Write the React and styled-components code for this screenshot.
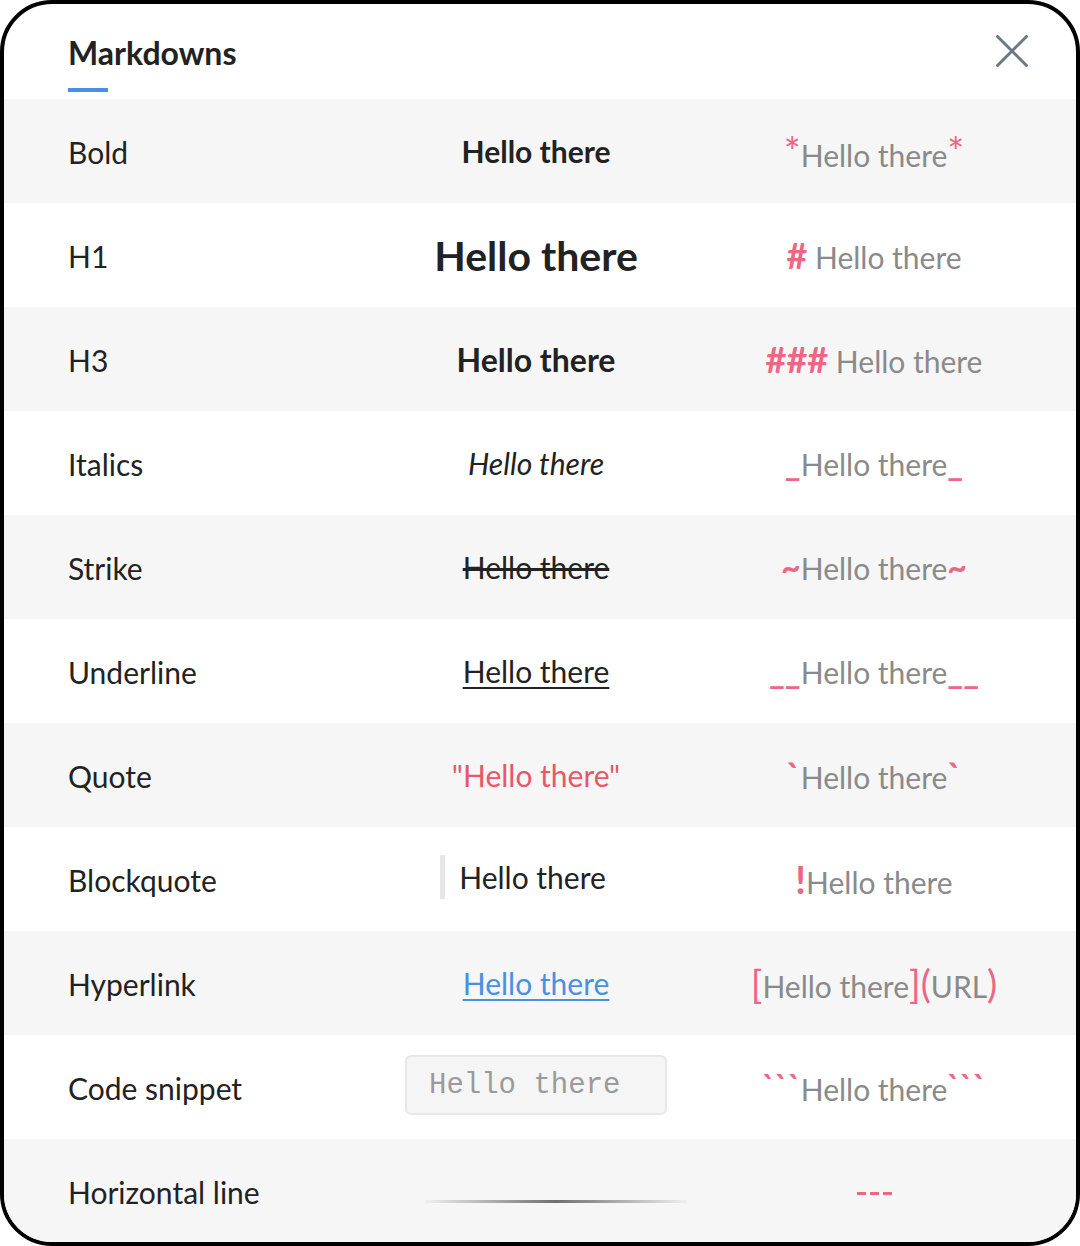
import React from 'react'
import styled, {createGlobalStyle} from 'styled-components';

const pink = '#ec6685';
const grey = '#8a8a8a';

const GlobalStyle = createGlobalStyle`
    html, body {
        margin: 0;
        padding: 0;
        background: #ffffff;
        font-family: Lato, "Open Sans", sans-serif;
    }
`;

const Card = styled.div`
    box-sizing: border-box;
    width: 1080px;
    height: 1246px;
    border: 4px solid #000;
    border-radius: 52px;
    overflow: hidden;
    background: #fff;
`;

const Header = styled.div`
    height: 95px;
    display: flex;
    justify-content: space-between;
    padding: 0 48px 0 64px;
`;

const Tab = styled.div`
    display: flex;
    flex-direction: column;
    justify-content: flex-end;
    padding-bottom: 7px;
`;

const TabTitle = styled.h1`
    margin: 0;
    font-size: 32px;
    font-weight: 700;
    color: #222;
    line-height: 38px;
`;

const TabBar = styled.div`
    width: 40px;
    height: 4px;
    background: #4a90e2;
    margin-top: 16px;
`;

const Close = styled.button`
    border: 0;
    background: none;
    padding: 0;
    margin-top: 31px;
    width: 32px;
    height: 32px;
    cursor: pointer;
`;

const Row = styled.div`
    height: 104px;
    display: grid;
    grid-template-columns: 332px 272px 1fr;
    align-items: center;
    padding-left: 64px;
    background: ${p => p.shaded ? '#f6f6f6' : '#fff'};
`;

const Label = styled.div`
    font-size: 30px;
    color: #222;
    padding-top: 2px;
`;

const Sample = styled.div`
    display: flex;
    justify-content: center;
    align-items: center;
    font-size: 30px;
    color: #222;
`;

const Syntax = styled.div`
    text-align: center;
    font-size: 30px;
    color: ${grey};
    padding-top: 2px;
    white-space: nowrap;
`;

const Mark = styled.span`
    color: ${pink};
    font-weight: ${p => p.bold ? 700 : 400};
    font-size: ${p => p.size || 'inherit'};
    vertical-align: ${p => p.up ? p.up : 'baseline'};
    line-height: 1;
`;

const Bold = styled.span`
    font-weight: 700;
    font-size: ${p => p.size}px;
`;

const Italic = styled.span`
    font-style: italic;
`;

const Strike = styled.span`
    text-decoration: line-through;
`;

const Under = styled.span`
    text-decoration: underline;
    text-underline-offset: 4px;
    text-decoration-thickness: 2px;
`;

const QuoteText = styled.span`
    color: #e8576a;
`;

const Block = styled.div`
    display: flex;
    align-items: center;
    gap: 14px;
    margin-left: -26px;
    margin-top: -4px;
    &::before {
        content: '';
        width: 5px;
        height: 44px;
        background: #e6e6e6;
    }
`;

const Link = styled.a`
    color: #4a90e2;
    text-decoration: underline;
    text-underline-offset: 4px;
    text-decoration-thickness: 2px;
`;

const Code = styled.code`
    box-sizing: border-box;
    width: 262px;
    height: 60px;
    display: flex;
    align-items: center;
    padding-left: 22px;
    background: #f5f5f5;
    border: 2px solid #e7e7e7;
    border-radius: 6px;
    font-family: "Liberation Mono", monospace;
    font-size: 29px;
    color: #9a9a9a;
    margin-top: -4px;
`;

const Rule = styled.div`
    flex-shrink: 0;
    width: 262px;
    height: 3px;
    margin: 20px 0 0 40px;
    background: linear-gradient(90deg, rgba(120,120,120,0.05), #6f6f6f 50%, rgba(120,120,120,0.05));
`;

const Dashes = styled.div`
    display: flex;
    justify-content: center;
    gap: 4px;
    padding-top: 2px;
    span {
        width: 9px;
        height: 3px;
        background: ${pink};
    }
`;

const rows = [
    {label: 'Bold', sample: <Bold size={30}>Hello there</Bold>,
        syntax: <><Mark size="40px">*</Mark>Hello there<Mark size="40px">*</Mark></>},
    {label: 'H1', sample: <Bold size={41}>Hello there</Bold>,
        syntax: <><Mark bold size="36px">#</Mark> Hello there</>},
    {label: 'H3', sample: <Bold size={32}>Hello there</Bold>,
        syntax: <><Mark bold size="36px">###</Mark> Hello there</>},
    {label: 'Italics', sample: <Italic>Hello there</Italic>,
        syntax: <><Mark bold size="34px">_</Mark>Hello there<Mark bold size="34px">_</Mark></>},
    {label: 'Strike', sample: <Strike>Hello there</Strike>,
        syntax: <><Mark bold size="34px">~</Mark>Hello there<Mark bold size="34px">~</Mark></>},
    {label: 'Underline', sample: <Under>Hello there</Under>,
        syntax: <><Mark bold size="34px">__</Mark>Hello there<Mark bold size="34px">__</Mark></>},
    {label: 'Quote', sample: <QuoteText>"Hello there"</QuoteText>,
        syntax: <><Mark bold size="36px">`</Mark>Hello there<Mark bold size="36px">`</Mark></>},
    {label: 'Blockquote', sample: <Block>Hello there</Block>,
        syntax: <><Mark bold size="38px">!</Mark>Hello there</>},
    {label: 'Hyperlink', sample: <Link href="#">Hello there</Link>,
        syntax: <><Mark size="38px">[</Mark>Hello there<Mark size="38px">](</Mark>URL<Mark size="38px">)</Mark></>},
    {label: 'Code snippet', sample: <Code>Hello there</Code>,
        syntax: <><Mark bold size="32px" up="3px">```</Mark>Hello there<Mark bold size="32px" up="3px">```</Mark></>},
    {label: 'Horizontal line', sample: <Rule />,
        syntax: <Dashes><span /><span /><span /></Dashes>},
];

export default function App() {
    return (
        <>
            <GlobalStyle />
            <Card>
                <Header>
                    <Tab>
                        <TabTitle>Markdowns</TabTitle>
                        <TabBar />
                    </Tab>
                    <Close aria-label="Close">
                        <svg width="32" height="32" viewBox="0 0 32 32">
                            <path d="M1.5 1.5 L30.5 30.5 M30.5 1.5 L1.5 30.5" stroke="#6b7886" strokeWidth="3" strokeLinecap="round" fill="none" />
                        </svg>
                    </Close>
                </Header>
                {rows.map((r, i) => (
                    <Row key={r.label} shaded={i % 2 === 0}>
                        <Label>{r.label}</Label>
                        <Sample>{r.sample}</Sample>
                        <Syntax>{r.syntax}</Syntax>
                    </Row>
                ))}
            </Card>
        </>
    );
}
